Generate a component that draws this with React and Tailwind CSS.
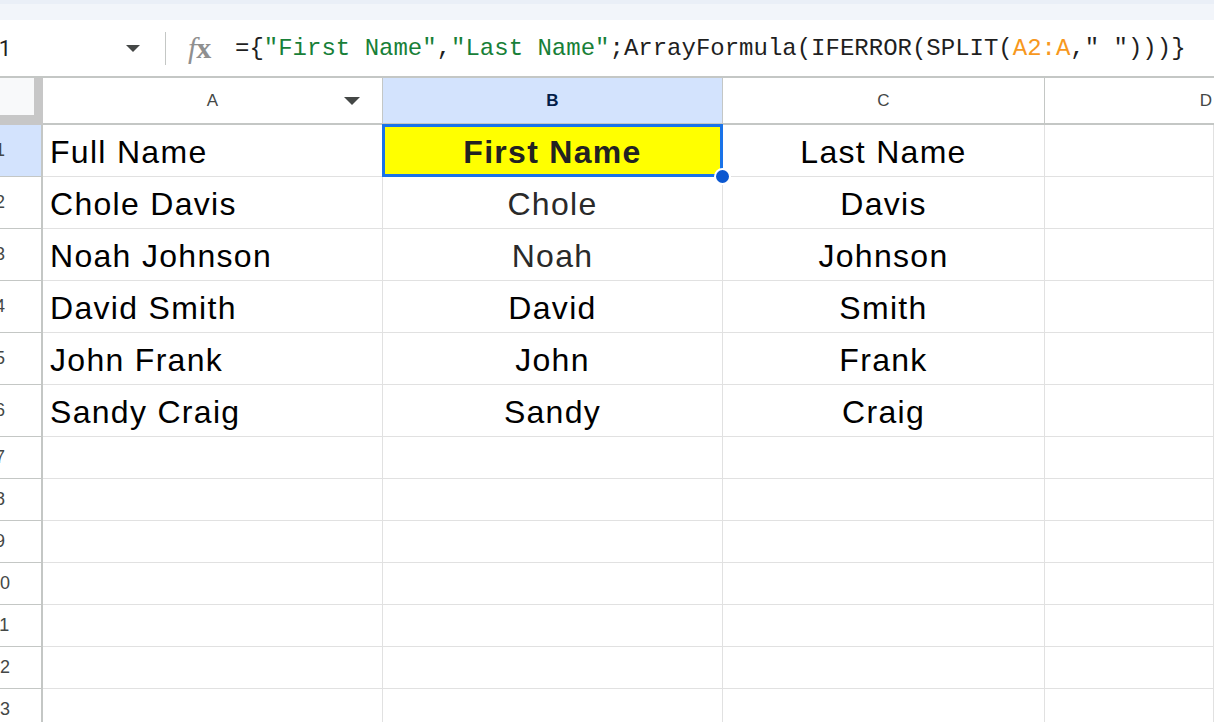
import React from 'react';

const rows = [
  { a: 'Full Name', b: 'First Name', c: 'Last Name' },
  { a: 'Chole Davis', b: 'Chole', c: 'Davis', soft: true },
  { a: 'Noah Johnson', b: 'Noah', c: 'Johnson', soft: true },
  { a: 'David Smith', b: 'David', c: 'Smith' },
  { a: 'John Frank', b: 'John', c: 'Frank' },
  { a: 'Sandy Craig', b: 'Sandy', c: 'Craig' },
];

const emptyRows = [7, 8, 9, 10, 11, 12, 13];

const cellText = 'text-[32px] leading-[36px] tracking-[1.3px] whitespace-nowrap';

const RowHead = ({ n, active, tall }) => (
  <div
    className={`relative overflow-hidden border-r-2 border-b border-[#c4c7c5] ${tall ? 'h-[52px]' : 'h-[42px]'} ${
      active ? 'bg-[#d3e3fd]' : 'bg-white'
    }`}
  >
    {/* number is centered in a wider column that runs off the left edge */}
    <div className="absolute top-0 bottom-0 -left-[24px] w-[48px] flex items-center justify-center text-[18px] text-[#444746]">
      {n}
    </div>
  </div>
);

const Cell = ({ children, tall, center, className = '' }) => (
  <div
    className={`relative flex items-center pt-[3px] border-r border-b border-[#e1e1e1] ${tall ? 'h-[52px]' : 'h-[42px]'} ${
      center ? 'justify-center' : 'pl-[7px]'
    } ${className}`}
  >
    {children}
  </div>
);

export default function App() {
  return (
    <div
      className="w-[1214px] h-[722px] overflow-hidden bg-white"
      style={{ fontFamily: '"Liberation Sans", Arial, sans-serif' }}
    >
      {/* browser/toolbar strip */}
      <div className="h-[20px] bg-[#f2f5fa] border-t-4 border-[#eaeff7]" />

      {/* formula bar */}
      <div className="h-[56px] flex items-center">
        <div className="w-[152px] flex items-center overflow-hidden">
          <span className="-ml-[15px] text-[22px] text-[#1f1f1f] font-['Roboto',sans-serif]">B1</span>
          <div className="ml-auto mr-[12px] w-0 h-0 border-l-[7px] border-r-[7px] border-t-[7px] border-l-transparent border-r-transparent border-t-[#444746]" />
        </div>
        <div className="w-px h-[33px] bg-[#c4c7c5] ml-[13px]" />
        <span
          className="ml-[22px] w-[47px] text-[30px] leading-none font-bold text-[#8f8f8f]"
          style={{ fontFamily: '"Liberation Serif", "DejaVu Serif", serif' }}
        >
          <span className="italic font-normal">f</span>x
        </span>
        <div
          className="text-[24px] whitespace-nowrap text-[#1f1f1f] pt-[2px]"
          style={{ fontFamily: '"Liberation Mono", "DejaVu Sans Mono", monospace' }}
        >
          <span>={'{'}</span>
          <span className="text-[#188038]">"First Name"</span>
          <span>,</span>
          <span className="text-[#188038]">"Last Name"</span>
          <span>;ArrayFormula(IFERROR(SPLIT(</span>
          <span className="text-[#f7981d]">A2:A</span>
          <span>," ")))</span>
          <span>{'}'}</span>
        </div>
      </div>

      {/* sheet */}
      <div className="grid grid-cols-[43px_340px_340px_322px_1fr]">
        {/* column headers */}
        <div className="h-[49px] border-t-2 border-[#c4c7c5] bg-[#f8f9fa] flex">
          <div className="flex-1 border-b-[10px] border-[#c7c7c7]" />
          <div className="w-[9px] bg-[#c7c7c7]" />
        </div>
        <div className="relative h-[49px] border-t-2 border-b-2 border-r border-[#c4c7c5] flex items-center justify-center text-[17px] text-[#444746]">
          A
          <div className="absolute right-[22px] top-[19px] w-0 h-0 border-l-[8px] border-r-[8px] border-t-[8px] border-l-transparent border-r-transparent border-t-[#444746]" />
        </div>
        <div className="h-[49px] border-t-2 border-b-2 border-r border-[#c4c7c5] bg-[#d3e3fd] flex items-center justify-center text-[17px] font-bold text-[#041e49]">
          B
        </div>
        <div className="h-[49px] border-t-2 border-b-2 border-r border-[#c4c7c5] flex items-center justify-center text-[17px] text-[#444746]">
          C
        </div>
        <div className="h-[49px] border-t-2 border-b-2 border-[#c4c7c5] flex items-center justify-end pr-[2px] text-[17px] text-[#444746]">
          D
        </div>

        {rows.map((r, i) => (
          <React.Fragment key={i}>
            <RowHead n={i + 1} active={i === 0} tall />
            <Cell tall>
              <span className={`${cellText} text-black`}>{r.a}</span>
            </Cell>
            {i === 0 ? (
              <Cell tall center className="bg-[#ffff00] z-10">
                <span className={`${cellText} font-bold text-[#222]`}>{r.b}</span>
                <div className="absolute -left-px -top-px -right-px -bottom-px border-[3px] border-[#1a73e8]" />
                <div className="absolute -right-[9px] -bottom-[9px] w-[17px] h-[17px] rounded-full bg-[#0b57d0] border-2 border-white" />
              </Cell>
            ) : (
              <Cell tall center>
                <span className={`${cellText} ${r.soft ? 'text-[#2a2a2a]' : 'text-black'}`}>{r.b}</span>
              </Cell>
            )}
            <Cell tall center>
              <span className={`${cellText} text-black`}>{r.c}</span>
            </Cell>
            <Cell tall />
          </React.Fragment>
        ))}

        {emptyRows.map((n) => (
          <React.Fragment key={n}>
            <RowHead n={n} />
            <Cell />
            <Cell />
            <Cell />
            <Cell />
          </React.Fragment>
        ))}
      </div>
    </div>
  );
}
